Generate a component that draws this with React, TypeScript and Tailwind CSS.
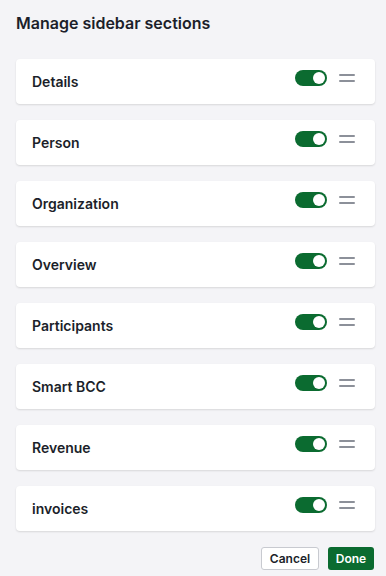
import React from "react";

const sections = [
  "Details",
  "Person",
  "Organization",
  "Overview",
  "Participants",
  "Smart BCC",
  "Revenue",
  "invoices",
];

function Toggle() {
  return (
    <div className="w-[32px] h-[16px] rounded-full bg-[#0b6b30] flex items-center justify-end pr-[2px]">
      <div className="w-[12px] h-[12px] rounded-full bg-white" />
    </div>
  );
}

function Handle() {
  return (
    <div className="w-[16px] flex flex-col gap-[4px]">
      <div className="h-[2px] bg-[#8c9099] rounded-full" />
      <div className="h-[2px] bg-[#8c9099] rounded-full" />
    </div>
  );
}

export default function App() {
  return (
    <div
      className="w-[386px] h-[576px] bg-[#f4f4f7] pl-[16px] pr-[11px] pt-[13px] text-[#1c1f2a]"
      style={{ fontFamily: "Inter, 'Noto Sans', sans-serif" }}
    >
      <h1 className="text-[16px] leading-[20px] font-semibold">Manage sidebar sections</h1>
      <div className="mt-[26px] flex flex-col gap-[16px]">
        {sections.map((s) => (
          <div
            key={s}
            className="h-[45px] bg-white rounded-[4px] shadow-[0_1px_2px_rgba(0,0,0,0.12)] flex items-center pl-[16px] pr-[20px]"
          >
            <span className="flex-1 text-[14px] font-semibold">{s}</span>
            <div className="flex items-center gap-[12px] mb-[8px]">
              <Toggle />
              <Handle />
            </div>
          </div>
        ))}
      </div>
      <div className="mt-[16px] flex justify-end gap-[9px] pr-[1px]">
        <button className="h-[23px] w-[58px] rounded-[3px] bg-white border border-[#c8cad0] text-[12px] font-semibold text-[#1c1f2a]">
          Cancel
        </button>
        <button className="h-[23px] w-[46px] rounded-[3px] bg-[#0b6b30] text-[12px] font-semibold text-white">
          Done
        </button>
      </div>
    </div>
  );
}
